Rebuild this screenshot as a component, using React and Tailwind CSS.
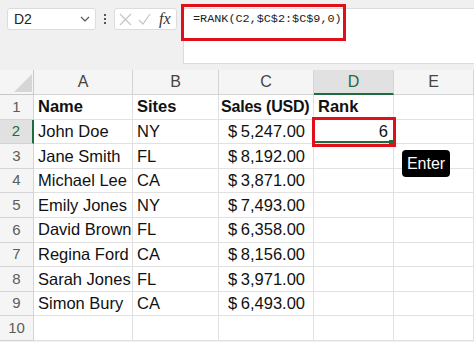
import React from "react"

const rows = [
  ["John Doe", "NY", "5,247.00", "6"],
  ["Jane Smith", "FL", "8,192.00", ""],
  ["Michael Lee", "CA", "3,871.00", ""],
  ["Emily Jones", "NY", "7,493.00", ""],
  ["David Brown", "FL", "6,358.00", ""],
  ["Regina Ford", "CA", "8,156.00", ""],
  ["Sarah Jones", "FL", "3,971.00", ""],
  ["Simon Bury", "CA", "6,493.00", ""],
]

const cols = ["A", "B", "C", "D", "E"]
const cell = "border-r border-b border-[#e1e1e1] bg-white flex items-center overflow-hidden whitespace-nowrap"
const rowHead = "border-r border-b border-[#d4d4d4] bg-[#f5f5f5] flex items-center justify-center text-[15px] text-[#5c5c5c]"

export default function App() {
  return (
    <div className="relative w-[474px] h-[342px] overflow-hidden bg-[#f0f0f0] font-['Liberation_Sans',Arial,sans-serif] text-[#111]">
      {/* formula bar */}
      <div className="flex items-start pt-[8px] h-[70px]">
        <div className="ml-[7px] w-[89px] h-[22px] bg-white border border-[#dcdcdc] rounded-[3px] flex items-center justify-between pl-[6px] pr-[5px]">
          <span className="text-[14px] text-[#222]">D2</span>
          <svg width="10" height="6" viewBox="0 0 10 6" fill="none" stroke="#555" strokeWidth="1.2">
            <path d="M1 1l4 4 4-4" />
          </svg>
        </div>
        <div className="w-[18px] h-[22px] flex flex-col items-center justify-center gap-[2px]">
          <span className="w-[2px] h-[2px] bg-[#555]" />
          <span className="w-[2px] h-[2px] bg-[#555]" />
          <span className="w-[2px] h-[2px] bg-[#555]" />
        </div>
        <div className="w-[63px] h-[22px] bg-white border border-[#dcdcdc] rounded-[3px] flex items-center pl-[4px] gap-[6px]">
          <svg width="13" height="13" viewBox="0 0 13 13" stroke="#c4c4c4" strokeWidth="1.2">
            <path d="M1 1l11 11M12 1L1 12" />
          </svg>
          <svg width="13" height="13" viewBox="0 0 13 13" fill="none" stroke="#c4c4c4" strokeWidth="1.2">
            <path d="M1 7l4 4 7-10" />
          </svg>
          <span className="ml-[2px] text-[16px] italic font-['Liberation_Serif',serif] text-[#333]">fx</span>
        </div>
        <div className="ml-[6px] flex-1 h-[56px] bg-white border border-[#dcdcdc] border-r-0 rounded-tl-[3px] pl-[9px] pt-[2px] text-[11.8px] leading-[16px] font-['Liberation_Mono',monospace] text-[#222]">
          =RANK(C2,$C$2:$C$9,0)
        </div>
      </div>

      {/* grid */}
      <div className="grid grid-cols-[34px_99px_86px_95px_80px_80px] grid-rows-[25px_repeat(10,24.6px)]">
        <div className="border-r border-b border-[#c8c8c8] bg-[#f5f5f5] flex items-end justify-end pr-[1px] pb-[2px]">
          <svg width="18" height="18" viewBox="0 0 18 18">
            <path d="M18 0V18H0Z" fill="#d6d6d6" />
          </svg>
        </div>
        {cols.map((c) => (
          <div
            key={c}
            className={
              c === "D"
                ? "border-r border-b-2 border-r-[#d4d4d4] border-b-[#1e6b41] bg-[#e1e1e1] flex items-center justify-center text-[16px] text-[#1e6b41]"
                : "border-r border-b border-[#d4d4d4] bg-[#f5f5f5] flex items-center justify-center text-[16px] text-[#444]"
            }
          >
            {c}
          </div>
        ))}

        <div className={rowHead}>1</div>
        <div className={`${cell} pl-[4px] text-[16.5px] font-bold`}>Name</div>
        <div className={`${cell} pl-[4px] text-[16.5px] font-bold`}>Sites</div>
        <div className={`${cell} pl-[2px] text-[16px] tracking-[-0.2px] font-bold`}>Sales (USD)</div>
        <div className={`${cell} pl-[4px] text-[16.5px] font-bold`}>Rank</div>
        <div className={cell} />

        {rows.map((r, i) => (
          <React.Fragment key={r[0]}>
            <div
              className={
                i === 0
                  ? "border-r-2 border-b border-r-[#1e6b41] border-b-[#d4d4d4] bg-[#e1e1e1] flex items-center justify-center text-[15px] text-[#1e6b41]"
                  : rowHead
              }
            >
              {i + 2}
            </div>
            <div className={`${cell} pl-[4px] text-[16.5px]`}>{r[0]}</div>
            <div className={`${cell} pl-[4px] text-[16.5px]`}>{r[1]}</div>
            <div className={`${cell} justify-between pl-[9px] pr-[8px] text-[16.5px]`}>
              <span>$</span>
              <span>{r[2]}</span>
            </div>
            <div className={`${cell} justify-end pr-[5px] text-[16.5px]`}>{r[3]}</div>
            <div className={cell} />
          </React.Fragment>
        ))}

        <div className={rowHead}>10</div>
        <div className={cell} />
        <div className={cell} />
        <div className={cell} />
        <div className={cell} />
        <div className={cell} />
      </div>

      {/* annotations */}
      <div className="absolute left-[181px] top-[4px] w-[165px] h-[37px] border-[3px] border-[#e0101a]" />
      <div className="absolute left-[312px] top-[117px] w-[84px] h-[30px] border-[3px] border-[#e0101a]">
        <div className="absolute left-0 right-[2px] bottom-[1px] h-[2px] bg-[#1e6b41]" />
        <div className="absolute right-[0px] bottom-0 w-[4px] h-[4px] bg-[#1e6b41]" />
      </div>
      <div className="absolute left-[402px] top-[150px] w-[48px] h-[27px] bg-black rounded-[4px] flex items-center justify-center text-white text-[16px]">
        Enter
      </div>
    </div>
  )
}
